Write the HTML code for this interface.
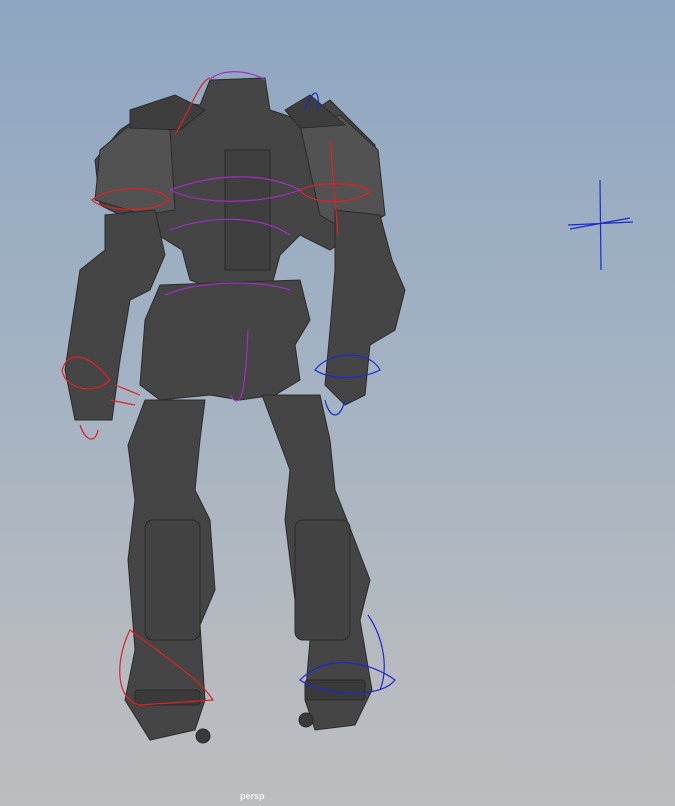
<!DOCTYPE html>
<html><head><style>
html,body{margin:0;padding:0;width:675px;height:806px;overflow:hidden}
body{background:linear-gradient(#8ea6c1 0%,#a3b2c3 45%,#b6babf 80%,#bbbdc0 100%)}
svg{position:absolute;left:0;top:0}
.t{position:absolute;left:240px;top:791px;font:bold 9px "Liberation Sans",sans-serif;color:#f2f2f2}
</style></head><body>
<svg width="675" height="806" viewBox="0 0 675 806">
<g fill="#454545" stroke="#2c2c2c" stroke-width="1">
<path d="M210 80 L265 78 L270 110 L300 120 L330 100 L375 145 L385 215 L360 230 L330 250 L300 235 L280 255 L272 285 L255 290 L215 290 L190 280 L182 250 L150 230 L100 205 L95 160 L120 130 L165 100 L200 105 Z"/>
<path d="M100 150 L130 125 L170 130 L175 210 L145 215 L95 200 Z" fill="#525252"/>
<path d="M300 125 L340 115 L378 150 L385 215 L345 230 L320 215 Z" fill="#525252"/>
<path d="M130 110 L175 95 L205 110 L180 130 L130 128 Z" fill="#3e3e3e"/>
<path d="M285 110 L310 95 L345 125 L300 128 Z" fill="#3e3e3e"/>
<path d="M105 215 L155 210 L165 255 L150 290 L130 300 L120 360 L112 420 L75 420 L65 370 L80 270 L105 250 Z"/>
<path d="M335 210 L380 215 L392 260 L405 290 L395 330 L370 345 L365 395 L345 405 L325 385 L330 330 L335 270 Z"/>
<path d="M160 285 L300 280 L310 320 L295 345 L300 380 L275 395 L240 400 L210 395 L160 400 L140 385 L145 320 Z"/>
<path d="M145 400 L205 400 L200 440 L195 490 L210 520 L215 590 L200 625 L205 700 L195 730 L150 740 L125 700 L135 650 L128 560 L135 500 L128 445 Z"/>
<path d="M262 395 L320 395 L330 440 L335 490 L345 515 L370 580 L360 620 L372 690 L355 725 L315 730 L305 700 L310 640 L295 600 L285 520 L290 470 L275 430 Z"/>
</g>
<g fill="#3a3a3a" stroke="#2a2a2a">
<rect x="135" y="690" width="65" height="15" rx="3"/>
<rect x="305" y="680" width="60" height="20" rx="3"/>
<rect x="145" y="520" width="55" height="120" rx="8" fill="#424242"/>
<rect x="295" y="520" width="55" height="120" rx="8" fill="#424242"/>
<circle cx="203" cy="736" r="7"/><circle cx="306" cy="720" r="7"/>
<rect x="225" y="150" width="45" height="120" fill="#3f3f3f"/>
</g>
<g fill="none" stroke-width="1.2">
<path d="M175 135 C190 110 200 80 210 78" stroke="#d22"/>
<path d="M92 200 C110 185 160 185 170 200 C150 215 100 210 92 200Z" stroke="#d22"/>
<path d="M300 190 C320 180 365 183 370 192 C350 205 310 205 300 190Z M330 140 L338 235" stroke="#d22"/>
<path d="M62 370 C70 345 95 360 110 380 C95 395 65 390 62 370Z M80 425 C85 440 95 445 98 430 M115 385 L140 395 M110 400 L135 405" stroke="#d22"/>
<path d="M130 630 C115 660 115 700 140 705 L213 700 C200 680 170 660 130 630Z" stroke="#d22"/>
<path d="M210 80 C220 68 250 70 265 80 M170 190 C210 175 260 170 300 190 C260 205 200 205 170 190Z M170 230 C210 215 260 215 290 235 M165 295 C200 280 260 280 290 290 M230 395 C240 410 245 400 248 330" stroke="#a030c0"/>
<path d="M305 110 C312 90 320 85 318 110 M300 680 C330 650 375 665 395 680 C380 700 320 695 300 680Z M368 615 C385 640 388 670 380 690 M315 370 C330 350 370 350 380 370 C360 380 330 380 315 370Z M325 400 C330 420 340 420 345 400" stroke="#1a2ad0"/>
<path d="M600 180 L601 270 M568 225 L633 222 M570 229 L630 218" stroke="#1a2ad0"/>
</g>
</svg>
<div class="t">persp</div>
</body></html>
